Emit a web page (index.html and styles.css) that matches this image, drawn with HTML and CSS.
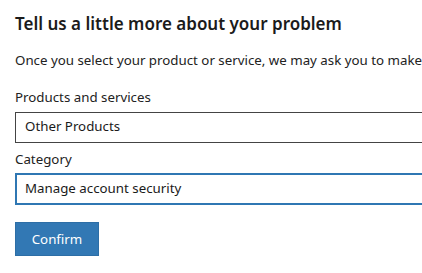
FILE: index.html
```html
<!DOCTYPE html>
<html>
<head>
<meta charset="utf-8">
<link rel="stylesheet" href="styles.css">
</head>
<body>
<div class="page">
  <h1 class="title">Tell us a little more about your problem</h1>
  <p class="intro">Once you select your product or service, we may ask you to make</p>
  <div class="field first">
    <label class="label">Products and services</label>
    <div class="select">Other Products</div>
  </div>
  <div class="field second">
    <label class="label">Category</label>
    <div class="select focused">Manage account security</div>
  </div>
  <button class="confirm">Confirm</button>
</div>
</body>
</html>
```
FILE: styles.css
```css
html, body {
  margin: 0;
  padding: 0;
  background: #ffffff;
  overflow: hidden;
}
.page {
  width: 600px;
  padding: 12px 0 0 15px;
  font-family: "Noto Sans", "Open Sans", sans-serif;
  color: #222222;
  display: flex;
  flex-direction: column;
  align-items: flex-start;
}
.title {
  margin: 0;
  font-size: 17px;
  font-weight: 600;
  line-height: 24px;
  color: #1b1b1b;
  white-space: nowrap;
}
.intro {
  margin: 14px 0 0 0;
  font-size: 13.3px;
  line-height: 20px;
  white-space: nowrap;
}
.field {
  display: flex;
  flex-direction: column;
  width: 100%;
}
.field.first {
  margin-top: 17px;
}
.field.second {
  margin-top: 6px;
}
.label {
  font-size: 13.3px;
  line-height: 20px;
}
.first .label {
  margin-bottom: 5px;
}
.second .label {
  margin-bottom: 4px;
}
.select {
  box-sizing: border-box;
  height: 31px;
  border: 1px solid #444444;
  padding: 0 9px;
  font-size: 13.3px;
  line-height: 27px;
  color: #1a1a1a;
}
.select.focused {
  height: 32px;
  border: 2px solid #2f77b3;
  line-height: 27px;
  padding: 0 8px;
}
.confirm {
  margin-top: 17px;
  width: 84px;
  height: 34px;
  background: #3278b4;
  border: 1px solid #2d6ea6;
  color: #ffffff;
  font-family: "Noto Sans", "Open Sans", sans-serif;
  font-size: 13.3px;
  padding: 0;
  cursor: pointer;
}
```
